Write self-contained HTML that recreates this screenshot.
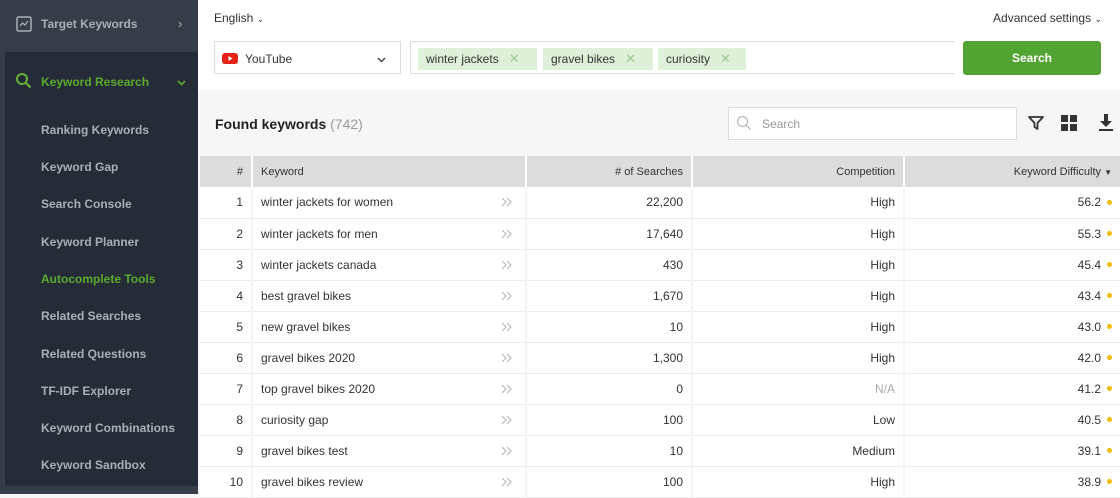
<!DOCTYPE html>
<html><head><style>
*{box-sizing:border-box;margin:0;padding:0}
body{width:1120px;height:494px;overflow:hidden;font-family:"Liberation Sans",Arial,sans-serif;font-size:12px;color:#333;background:#f6f6f6;position:relative}
.side{position:absolute;left:0;top:0;width:198px;height:494px;background:#363c48}
.sub{position:absolute;left:5px;top:52px;width:193px;height:434px;background:#262c37}
.si{position:absolute;left:41px;color:#a9afb9;font-weight:bold;font-size:12px}
.top{position:absolute;left:198px;top:0;width:922px;height:90px;background:#fff}
.t{position:absolute}
table{position:absolute;left:200px;top:156px;width:920px;border-collapse:collapse;background:#fff}
th{background:#dcdcdc;height:31px;font-weight:normal;font-size:11px;color:#333;border-left:2px solid #fff;padding:0 8px}
td{height:31px;border-bottom:1px solid #ececec;border-left:2px solid #f4f4f4;padding:0 8px;font-size:12px}
.r{text-align:right}
.dot{display:inline-block;width:5px;height:5px;border-radius:50%;background:#f0bb00;margin-left:6px;vertical-align:middle;position:relative;top:-1px}
.ar{float:right;margin-right:4px;margin-top:2px}
.tag{position:absolute;top:48px;height:22px;background:#dff0d8;color:#333;font-size:12px;line-height:22px;padding-left:8px}
.tag span{color:#9cc98f;margin-left:10px;font-size:13px}
</style></head><body>
<svg width="0" height="0" style="position:absolute"><defs><symbol id="dc" viewBox="0 0 12 10"><path d="M1 1l4 4-4 4M6 1l4 4-4 4" fill="none" stroke="#b5b5b5" stroke-width="1.1"/></symbol></defs></svg>
<div class="side">
<svg style="position:absolute;left:16px;top:16px" width="16" height="16" viewBox="0 0 16 16"><rect x="1" y="1" width="14" height="14" rx="1.5" fill="none" stroke="#aab0ba" stroke-width="1.5"/><path d="M4 10l2.5-3 2.5 2 3-4" fill="none" stroke="#aab0ba" stroke-width="1.3"/></svg>
<div class="si" style="top:17px;color:#a9afb9">Target Keywords</div>
<div class="t" style="left:178px;top:16px;color:#a9afb9;font-size:13px">›</div>
<div class="sub"></div>
<svg style="position:absolute;left:15px;top:72px" width="18" height="18" viewBox="0 0 18 18"><circle cx="7" cy="7" r="5" fill="none" stroke="#64b13c" stroke-width="2"/><path d="M10.5 10.5l5 5" stroke="#64b13c" stroke-width="2.2"/></svg>
<div class="si" style="top:75px;color:#5aaa2f">Keyword Research</div>
<svg style="position:absolute;left:177px;top:80px" width="9" height="6"><path d="M1 1l3.5 3.5L8 1" stroke="#5aaa2f" stroke-width="1.6" fill="none"/></svg>
<div class="si" style="top:123px">Ranking Keywords</div>
<div class="si" style="top:160px">Keyword Gap</div>
<div class="si" style="top:197px">Search Console</div>
<div class="si" style="top:235px">Keyword Planner</div>
<div class="si" style="top:272px;color:#5aaa2f">Autocomplete Tools</div>
<div class="si" style="top:309px">Related Searches</div>
<div class="si" style="top:347px">Related Questions</div>
<div class="si" style="top:384px">TF-IDF Explorer</div>
<div class="si" style="top:421px">Keyword Combinations</div>
<div class="si" style="top:458px">Keyword Sandbox</div>
</div>
<div class="top">
<div class="t" style="left:16px;top:11px;font-size:12px">English <span style="font-size:9px">&#8964;</span></div>
<div class="t" style="right:18px;top:11px;font-size:12px">Advanced settings <span style="font-size:9px">&#8964;</span></div>
<div class="t" style="left:16px;top:41px;width:187px;height:33px;border:1px solid #ddd;background:#fff"></div>
<svg style="position:absolute;left:24px;top:53px" width="16" height="11"><rect width="16" height="11" rx="3" fill="#e62117"/><path d="M6.5 3l4 2.5-4 2.5z" fill="#fff"/></svg>
<div class="t" style="left:47px;top:52px">YouTube</div>
<svg style="position:absolute;left:179px;top:57px" width="9" height="6"><path d="M1 1l3.5 3.5L8 1" stroke="#444" stroke-width="1.5" fill="none"/></svg>
<div class="t" style="left:212px;top:41px;width:545px;height:33px;border:1px solid #ddd;border-right:none;background:#fff"></div>
<div class="t" style="left:765px;top:41px;width:138px;height:34px;background:#52a432;border-radius:3px;color:#fff;font-weight:bold;text-align:center;line-height:34px">Search</div>
</div>
<div class="tag" style="left:418px;width:119px">winter jackets<span>✕</span></div>
<div class="tag" style="left:543px;width:110px">gravel bikes<span>✕</span></div>
<div class="tag" style="left:658px;width:88px">curiosity<span>✕</span></div>
<div class="t" style="left:215px;top:116px;font-size:14px;font-weight:bold;color:#222">Found keywords <span style="font-weight:normal;color:#999">(742)</span></div>
<div class="t" style="left:728px;top:107px;width:289px;height:33px;border:1px solid #ddd;background:#fff"></div>
<svg style="position:absolute;left:736px;top:115px" width="16" height="16"><circle cx="6.5" cy="6.5" r="5" fill="none" stroke="#bbb" stroke-width="1.3"/><path d="M10 10l4.5 4.5" stroke="#bbb" stroke-width="1.3"/></svg>
<div class="t" style="left:762px;top:117px;color:#999;font-size:12px">Search</div>
<svg style="position:absolute;left:1028px;top:115px" width="16" height="16"><path d="M1 2h14l-5.5 6v6l-3-2V8z" fill="none" stroke="#333" stroke-width="1.8" stroke-linejoin="round"/></svg>
<svg style="position:absolute;left:1061px;top:115px" width="16" height="16"><rect x="0" y="0" width="7" height="7" fill="#333"/><rect x="9" y="0" width="7" height="7" fill="#333"/><rect x="0" y="9" width="7" height="7" fill="#333"/><rect x="9" y="9" width="7" height="7" fill="#333"/></svg>
<svg style="position:absolute;left:1098px;top:113px" width="16" height="20"><path d="M6 1h4v7h4l-6 6-6-6h4z" fill="#333"/><rect x="1" y="16" width="14" height="2" fill="#333"/></svg>
<table>
<tr><th class="r" style="width:52px;border-left:none">#</th><th style="text-align:left;width:274px">Keyword</th><th class="r" style="width:166px"># of Searches</th><th class="r" style="width:212px">Competition</th><th class="r">Keyword Difficulty <span style="font-size:8px">▼</span></th></tr>
<tr><td class="r" style="border-left:none">1</td><td>winter jackets for women<svg class="ar" width="12" height="10"><use href="#dc"/></svg></td><td class="r">22,200</td><td class="r">High</td><td class="r">56.2<span class="dot"></span></td></tr>
<tr><td class="r" style="border-left:none">2</td><td>winter jackets for men<svg class="ar" width="12" height="10"><use href="#dc"/></svg></td><td class="r">17,640</td><td class="r">High</td><td class="r">55.3<span class="dot"></span></td></tr>
<tr><td class="r" style="border-left:none">3</td><td>winter jackets canada<svg class="ar" width="12" height="10"><use href="#dc"/></svg></td><td class="r">430</td><td class="r">High</td><td class="r">45.4<span class="dot"></span></td></tr>
<tr><td class="r" style="border-left:none">4</td><td>best gravel bikes<svg class="ar" width="12" height="10"><use href="#dc"/></svg></td><td class="r">1,670</td><td class="r">High</td><td class="r">43.4<span class="dot"></span></td></tr>
<tr><td class="r" style="border-left:none">5</td><td>new gravel bikes<svg class="ar" width="12" height="10"><use href="#dc"/></svg></td><td class="r">10</td><td class="r">High</td><td class="r">43.0<span class="dot"></span></td></tr>
<tr><td class="r" style="border-left:none">6</td><td>gravel bikes 2020<svg class="ar" width="12" height="10"><use href="#dc"/></svg></td><td class="r">1,300</td><td class="r">High</td><td class="r">42.0<span class="dot"></span></td></tr>
<tr><td class="r" style="border-left:none">7</td><td>top gravel bikes 2020<svg class="ar" width="12" height="10"><use href="#dc"/></svg></td><td class="r">0</td><td class="r" style="color:#aaa">N/A</td><td class="r">41.2<span class="dot"></span></td></tr>
<tr><td class="r" style="border-left:none">8</td><td>curiosity gap<svg class="ar" width="12" height="10"><use href="#dc"/></svg></td><td class="r">100</td><td class="r">Low</td><td class="r">40.5<span class="dot"></span></td></tr>
<tr><td class="r" style="border-left:none">9</td><td>gravel bikes test<svg class="ar" width="12" height="10"><use href="#dc"/></svg></td><td class="r">10</td><td class="r">Medium</td><td class="r">39.1<span class="dot"></span></td></tr>
<tr><td class="r" style="border-left:none">10</td><td>gravel bikes review<svg class="ar" width="12" height="10"><use href="#dc"/></svg></td><td class="r">100</td><td class="r">High</td><td class="r">38.9<span class="dot"></span></td></tr>
</table>
</body></html>
